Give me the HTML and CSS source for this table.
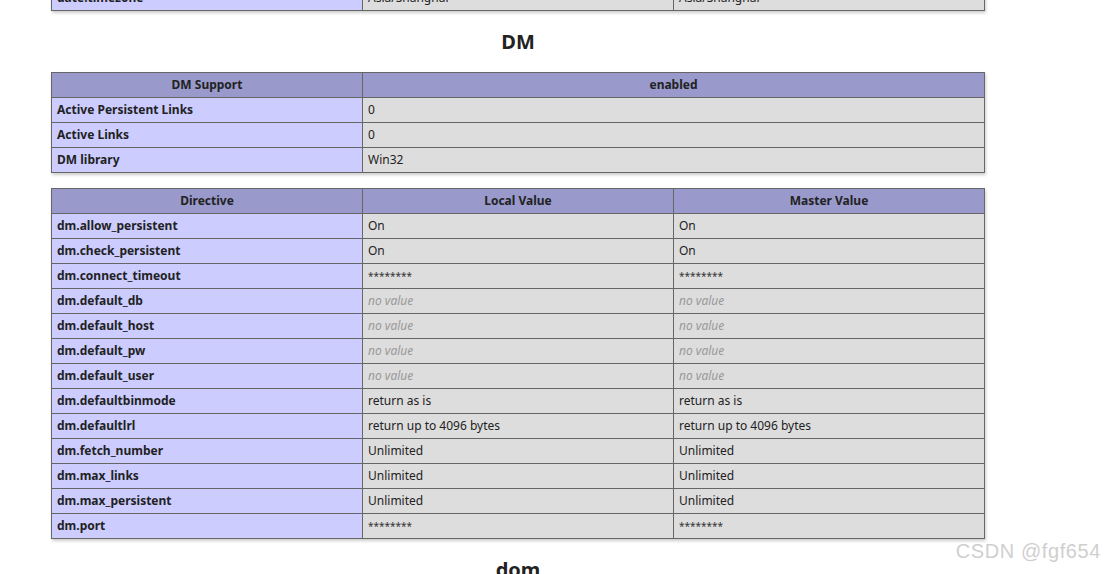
FILE: index.html
```html
<!DOCTYPE html>
<html>
<head>
<meta charset="utf-8">
<link rel="stylesheet" href="styles.css">
</head>
<body>
<div class="page">
  <table class="tbl tbl-top">
    <tr><td class="e">date.timezone</td><td class="v">Asia/Shanghai</td><td class="v">Asia/Shanghai</td></tr>
  </table>
  <h2>DM</h2>
  <table class="tbl">
    <tr class="h"><th>DM Support</th><th>enabled</th></tr>
    <tr><td class="e">Active Persistent Links</td><td class="v">0</td></tr>
    <tr><td class="e">Active Links</td><td class="v">0</td></tr>
    <tr><td class="e">DM library</td><td class="v">Win32</td></tr>
  </table>
  <div class="br"></div>
  <table class="tbl">
    <tr class="h"><th>Directive</th><th>Local Value</th><th>Master Value</th></tr>
    <tr><td class="e">dm.allow_persistent</td><td class="v">On</td><td class="v">On</td></tr>
    <tr><td class="e">dm.check_persistent</td><td class="v">On</td><td class="v">On</td></tr>
    <tr><td class="e">dm.connect_timeout</td><td class="v"><span class="mask">********</span></td><td class="v"><span class="mask">********</span></td></tr>
    <tr><td class="e">dm.default_db</td><td class="v"><i>no value</i></td><td class="v"><i>no value</i></td></tr>
    <tr><td class="e">dm.default_host</td><td class="v"><i>no value</i></td><td class="v"><i>no value</i></td></tr>
    <tr><td class="e">dm.default_pw</td><td class="v"><i>no value</i></td><td class="v"><i>no value</i></td></tr>
    <tr><td class="e">dm.default_user</td><td class="v"><i>no value</i></td><td class="v"><i>no value</i></td></tr>
    <tr><td class="e">dm.defaultbinmode</td><td class="v">return as is</td><td class="v">return as is</td></tr>
    <tr><td class="e">dm.defaultlrl</td><td class="v">return up to 4096 bytes</td><td class="v">return up to 4096 bytes</td></tr>
    <tr><td class="e">dm.fetch_number</td><td class="v">Unlimited</td><td class="v">Unlimited</td></tr>
    <tr><td class="e">dm.max_links</td><td class="v">Unlimited</td><td class="v">Unlimited</td></tr>
    <tr><td class="e">dm.max_persistent</td><td class="v">Unlimited</td><td class="v">Unlimited</td></tr>
    <tr><td class="e">dm.port</td><td class="v"><span class="mask">********</span></td><td class="v"><span class="mask">********</span></td></tr>
  </table>
  <h2>dom</h2>
</div>
<div class="watermark">CSDN @fgf654</div>
</body>
</html>
```

FILE: styles.css
```css
html, body {
  margin: 0;
  padding: 0;
  background: #fff;
  color: #222;
  font-family: "Noto Sans", "Open Sans", sans-serif;
  overflow: hidden;
}
.page {
  width: 1036px;
  display: flex;
  flex-direction: column;
  align-items: center;
  margin-top: -15px;
}
.tbl {
  border-collapse: collapse;
  width: 934px;
  box-shadow: 1px 2px 3px #ccc;
  font-size: 12px;
  line-height: 16px;
  table-layout: fixed;
}
.tbl td, .tbl th {
  border: 1px solid #666;
  padding: 4px 5px;
  vertical-align: baseline;
  text-align: left;
}
.tbl tr > :first-child {
  width: 300px;
}
.tbl .h th {
  background: #99c;
  text-align: center;
  font-weight: bold;
}
.tbl .e {
  background: #ccf;
  font-weight: bold;
}
.tbl .v {
  background: #ddd;
}
.tbl .v i {
  color: #999;
}
.mask {
  font-size: 10px;
  color: #333;
}
h2 {
  font-size: 20px;
  line-height: 24px;
  font-weight: bold;
  margin: 19px 0 18px;
  text-align: center;
}
.br {
  height: 15px;
}
.watermark {
  position: absolute;
  right: 5px;
  top: 540px;
  font-family: "Liberation Sans", Arial, sans-serif;
  font-size: 20px;
  color: #cfcfcf;
  letter-spacing: 0.6px;
}
```
